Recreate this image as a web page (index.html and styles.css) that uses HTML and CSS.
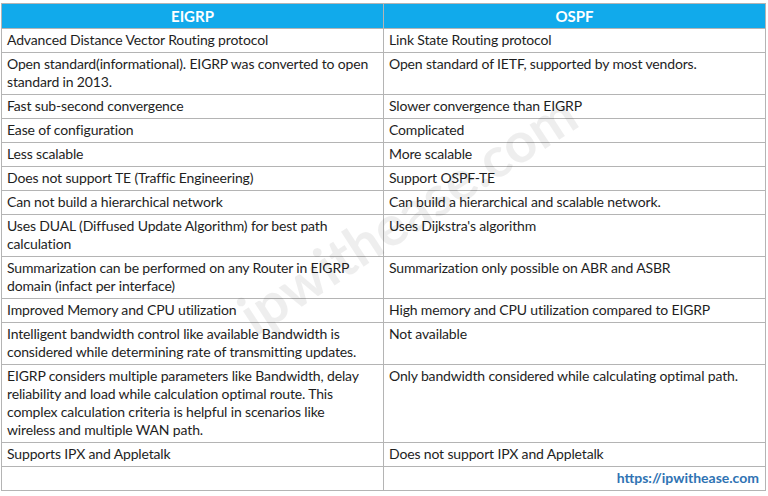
FILE: index.html
```html
<!DOCTYPE html>
<html>
<head>
<meta charset="utf-8">
<link rel="stylesheet" href="styles.css">
</head>
<body>
<div class="wrap">
<table class="cmp">
<colgroup><col class="c1"><col class="c2"></colgroup>
<thead>
<tr><th>EIGRP</th><th>OSPF</th></tr>
</thead>
<tbody>
<tr><td>Advanced Distance Vector Routing protocol</td><td>Link State Routing protocol</td></tr>
<tr><td>Open standard(informational). EIGRP was converted to open<br>standard in 2013.</td><td>Open standard of IETF, supported by most vendors.</td></tr>
<tr><td>Fast sub-second convergence</td><td>Slower convergence than EIGRP</td></tr>
<tr><td>Ease of configuration</td><td>Complicated</td></tr>
<tr><td>Less scalable</td><td>More scalable</td></tr>
<tr><td>Does not support TE (Traffic Engineering)</td><td>Support OSPF-TE</td></tr>
<tr><td>Can not build a hierarchical network</td><td>Can build a hierarchical and scalable network.</td></tr>
<tr><td>Uses DUAL (Diffused Update Algorithm) for best path<br>calculation</td><td>Uses Dijkstra's algorithm</td></tr>
<tr><td>Summarization can be performed on any Router in EIGRP<br>domain (infact per interface)</td><td>Summarization only possible on ABR and ASBR</td></tr>
<tr><td>Improved Memory and CPU utilization</td><td>High memory and CPU utilization compared to EIGRP</td></tr>
<tr><td>Intelligent bandwidth control like available Bandwidth is<br>considered while determining rate of transmitting updates.</td><td>Not available</td></tr>
<tr><td>EIGRP considers multiple parameters like Bandwidth, delay<br>reliability and load while calculation optimal route. This<br>complex calculation criteria is helpful in scenarios like<br>wireless and multiple WAN path.</td><td>Only bandwidth considered while calculating optimal path.</td></tr>
<tr><td>Supports IPX and Appletalk</td><td>Does not support IPX and Appletalk</td></tr>
<tr><td></td><td class="url">https://ipwithease.com</td></tr>
</tbody>
</table>
<div class="watermark">ipwithease.com</div>
</div>
</body>
</html>
```

FILE: styles.css
```css
html, body {
  margin: 0;
  padding: 0;
  background: #ffffff;
}
body {
  font-family: Lato, "Open Sans", sans-serif;
  color: #1e1e1e;
}
.wrap {
  position: relative;
  padding: 3px 0 0 1px;
  width: 764px;
}
.cmp {
  border-collapse: collapse;
  width: 764px;
  table-layout: fixed;
  font-size: 14px;
  line-height: 18px;
  letter-spacing: -0.15px;
}
.c1 { width: 382px; }
.c2 { width: 382px; }
.cmp th {
  background: #11aaeb;
  color: #ffffff;
  font-weight: 700;
  font-size: 15px;
  letter-spacing: 0;
  height: 24px;
  padding: 0;
  border: 1px solid #b4b4b4;
  text-align: center;
  vertical-align: middle;
}
.cmp td {
  border: 1px solid #b4b4b4;
  padding: 2px 5px 3px 5px;
  vertical-align: top;
  text-align: left;
  height: 18px;
}
.cmp td.url {
  text-align: right;
  color: #2f73b3;
  font-weight: 700;
  letter-spacing: 0;
  padding-right: 6px;
}
.watermark {
  position: absolute;
  left: 262px;
  top: 280px;
  font-size: 56px;
  font-weight: 700;
  color: rgba(0, 0, 0, 0.065);
  transform: rotate(-33deg);
  transform-origin: left bottom;
  white-space: nowrap;
  pointer-events: none;
}
```
